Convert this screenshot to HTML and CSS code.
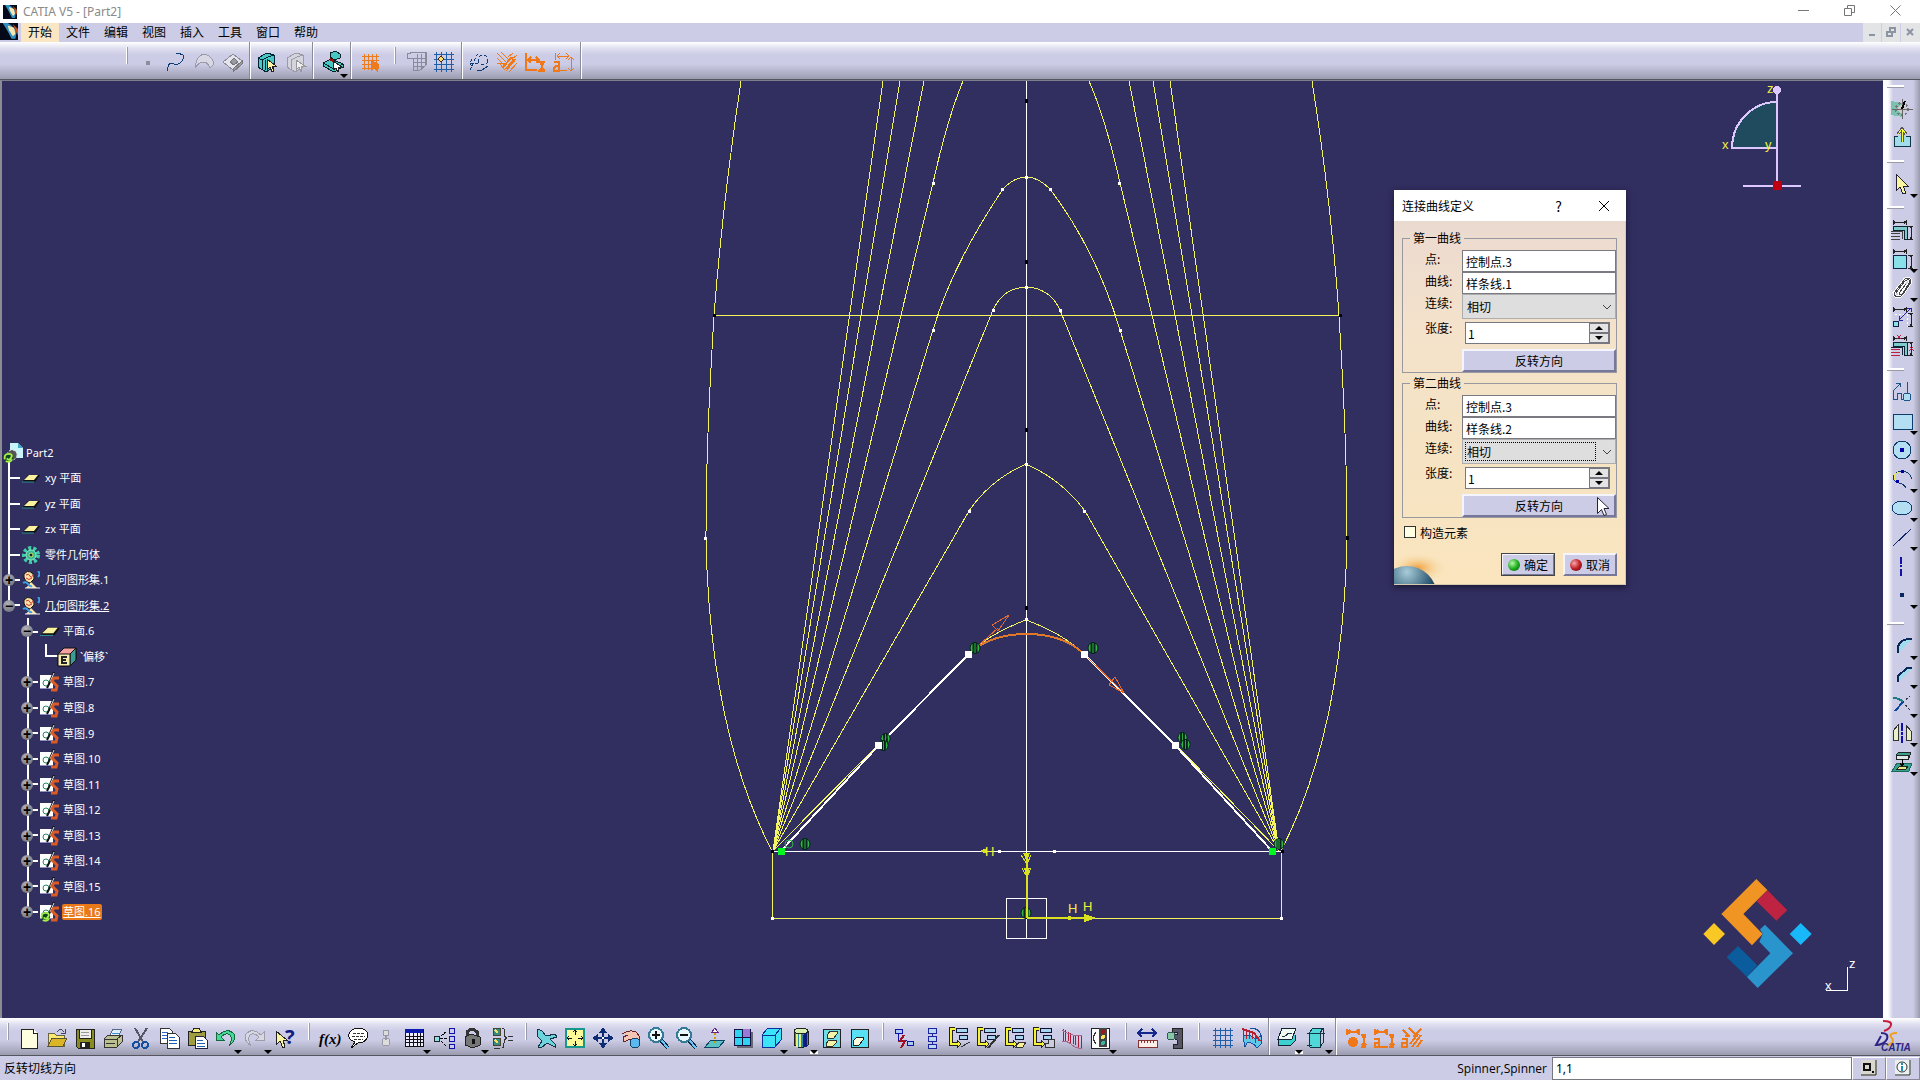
FILE: index.html
```html
<!DOCTYPE html>
<html lang="zh-CN">

<head>
  <meta charset="utf-8" />
  <title>CATIA V5 - [Part2]</title>
  <link rel="stylesheet" href="styles.css">
</head>

<body>
  <!-- shared drawings -->
  <svg class="sprite" aria-hidden="true">
    <symbol id="app" viewBox="0 0 14 14" preserveAspectRatio="none">
      <path d="M0 0h14v14H0z" fill="#050a18" />
      <path d="M2 0l3 5 4 8h3l1-6-4-5-3-2z" fill="#2f8fc0" />
      <path d="M6 2l5 2 1 5-2 2-3-5z" fill="#f6e7b0" />
      <path d="M10 1l4 4v5l-2-4z" fill="#c4501c" />
    </symbol>
    <symbol id="plane" viewBox="0 0 18 14">
      <path d="M1 10L6 4h12l-5 7H1z" fill="#111" />
      <path d="M2 9l5-5h9l-4 5z" fill="#fbf2a0" />
      <path d="M0 11h12" stroke="#2c8a96" />
    </symbol>
    <symbol id="geoset" viewBox="0 0 18 18">
      <path d="M2 3q3-4 7-2 4 3 3 7l-4 4q-7-2-6-9z" fill="#fbe3a8" stroke="#111" />
      <path d="M4 4q3-2 4 1t3-1M4 7q3 3 6 0" fill="none" stroke="#c33" />
      <path d="M4 17l5-6 6 6z" fill="#fbe3a8" />
      <path d="M1 12q3-2 5 1t4 2M16 6q3-3 0-6" fill="none" stroke="#3fa0e8" stroke-width="2" />
      <path d="M3 17h15" stroke="#eee" />
    </symbol>
    <symbol id="sketch" viewBox="0 0 20 20">
      <path d="M0 3h13v14H0z" fill="#fff" />
      <path d="M0 17h15" stroke="#227" />
      <circle cx="6" cy="11" r="3" fill="none" stroke="#2a8a66" />
      <path d="M14 0L9 12l-2 4" fill="none" stroke="#111" stroke-width="2" />
      <path d="M14 1l-4 9" stroke="#d8e8ee" />
      <path d="M19 6h-5l-2 3 5 5-1 4h-5" fill="none" stroke="#dc5a24" stroke-width="3" />
    </symbol>
    <symbol id="update" viewBox="0 0 12 12">
      <circle cx="6" cy="6" r="5" fill="#142" />
      <path d="M2 8q-1-6 4-6 5 0 3 4t-5 1M3 10q5 2 7-2" fill="none" stroke="#a5f04a" stroke-width="2" />
    </symbol>
    <symbol id="hgrid" viewBox="0 0 22 22">
      <path d="M3 1v20M8 1v20M13 1v20M18 1v20M1 3h20M1 8h20M1 13h20M1 18h20" fill="none" stroke="#205ea8" />
    </symbol>
    <symbol id="dims" viewBox="0 0 22 22">
      <path d="M2 1v5M15 1v5M2 3h13M17 7h5M17 20h5M20 8v11M4 2L2 3l2 2M13 2l2 1-2 2M19 9l1-2 1 2M19 18l1 2 1-2" fill="none" stroke="#222" />
    </symbol>
    <symbol id="odims" viewBox="0 0 22 22">
      <path d="M2 2v6M14 2v6M2 5h12M16 8h5M16 20h5M19 9v10M5 3L3 5l2 2M12 3l2 2-2 2M17 11l2-2 2 2M17 17l2 2 2-2" fill="none" stroke="#f07818" stroke-width="2" />
    </symbol>
    <symbol id="steps" viewBox="0 0 22 22">
      <path d="M7 1h11v4H7zM10 8h8v4h-8z" fill="#a8d4f0" stroke="#113" />
      <path d="M6 2H2v15h6" fill="none" stroke="#222" stroke-width="4" />
      <path d="M8 13l4 4-4 4z" fill="#f6f23a" stroke="#222" />
      <path d="M6 2H2v15h7" fill="none" stroke="#f6f23a" stroke-width="2" />
    </symbol>
    <symbol id="constraint" viewBox="0 0 12 12">
      <path d="M4 1q-3 1-3 5t3 5zM8 1q3 1 3 5t-3 5z" fill="#34b44a" stroke="#021" />
      <path d="M6 0v12" stroke="#021" stroke-width="3" />
      <path d="M6 1v10" stroke="#34b44a" />
    </symbol>
    <symbol id="zoomer" viewBox="0 0 22 22">
      <path d="M12 12l8 9" stroke="#124" stroke-width="4" />
      <path d="M13 13l7 8" stroke="#69c8f0" stroke-width="2" />
      <circle cx="8" cy="8" r="7" fill="#e8f8fb" stroke="#357a98" stroke-width="2" />
    </symbol>
  </svg>

  <header class="titlebar">
    <svg class="app-icon"><use href="#app" /></svg>
    <h1>CATIA V5 - [Part2]</h1>
    <div class="window-buttons">
      <button aria-label="最小化"><svg viewBox="0 0 11 11"><path d="M0 5.500h11" /></svg></button>
      <button aria-label="还原"><svg viewBox="0 0 11 11"><path d="M.5 3.500h7v7h-7zM3.500 3V.5h7v7H8" /></svg></button>
      <button aria-label="关闭"><svg viewBox="0 0 11 11"><path d="M.5.5l10 10M10.500.5l-10 10" /></svg></button>
    </div>
  </header>

  <nav class="menubar">
    <svg class="doc-icon"><use href="#app" /></svg>
    <button class="active">开始</button>
    <button>文件</button>
    <button>编辑</button>
    <button>视图</button>
    <button>插入</button>
    <button>工具</button>
    <button>窗口</button>
    <button>帮助</button>
    <div class="mdi-buttons">
      <button aria-label="最小化文档"><svg viewBox="0 0 10 10"><path d="M2 8h6" /></svg></button>
      <button aria-label="还原文档"><svg viewBox="0 0 10 10"><path d="M1 5h5v4H1zM4 4V1h5v4H7" /></svg></button>
      <button aria-label="关闭文档"><svg viewBox="0 0 10 10"><path d="M2 2l6 6M8 2L2 8" /></svg></button>
    </div>
  </nav>

  <div class="toolbar top-toolbar">
    <i class="grip"></i>
    <div class="tools">
      <button aria-label="点"><svg viewBox="0 0 22 22"><path d="M9 10h4v4H9z" fill="#8e8e9a" /></svg></button>
      <button aria-label="样条"><svg viewBox="0 0 22 22"><path d="M3 20q-1-8 4-8 4 3 8 0 5-4 3-8l-5-2-2 1" fill="none" stroke="#0c3c78" /></svg></button>
      <button aria-label="曲面"><svg viewBox="0 0 22 22"><path d="M2 17Q3 6 10 3q9 1 11 10l-4 4q-2-6-7-6-5 1-8 6z" fill="#d8d8e4" stroke="#9a9aa8" /></svg></button>
      <button aria-label="体"><svg viewBox="0 0 22 22"><path d="M2 11l10-8 9 7-9 9z" fill="#e4e4ec" stroke="#8a8a98" /><path d="M12 18l9-8v3l-9 8zM9 11l4-4 4 4-4 3z" fill="#9a9aa6" stroke="#777" /></svg></button>
    </div>
    <div class="tools ruled">
      <button aria-label="选择体"><svg viewBox="0 0 22 22"><path d="M2 7l9-5 7 2v12l-8 5-8-5z" fill="#48c8c4" stroke="#023" /><path d="M6 9l6-3 6-2M6 9v9M9 9v10M2 7l4 2" stroke="#023" fill="none" /><path d="M11 8v11l3-3 2 5 2-1-2-5h4z" fill="#fff4a8" stroke="#222" /></svg></button>
      <button aria-label="选择面"><svg viewBox="0 0 22 22"><path d="M3 7l9-5 7 2v12l-8 5-8-5z" fill="#d4d4de" stroke="#9a9aa8" /><path d="M7 9l6-3 6-2M7 9v9" stroke="#9a9aa8" fill="none" /><path d="M12 9v10l3-3 2 5 1-6h3z" fill="#eee" stroke="#999" /></svg></button>
    </div>
    <div class="tools ruled wide">
      <button class="menu" aria-label="装配"><svg viewBox="0 0 22 22"><path d="M1 12l8-4 12 5v3l-9 5-11-6z" fill="#48c8c4" stroke="#022" /><path d="M1 12l11 6 9-5" fill="none" stroke="#022" /><path d="M8 2l6-2 4 3v4l-6 2-4-3z" fill="#48c8c4" stroke="#022" /><path d="M8 8l6 4" stroke="#911" stroke-width="2" /><path d="M11 10v9l3-2 2 4 1-5h3z" fill="#fff" stroke="#222" /></svg></button>
    </div>
    <div class="tools ruled wide">
      <button aria-label="草图网格"><svg viewBox="0 0 22 22"><path d="M4 3v16M8 3v16M12 3v16M16 3v16M2 5h17M2 9h17M2 13h17M2 17h17" stroke="#ee7a1c" /><path d="M11 9v11l3-2 4 4 1-9z" fill="#ee7a1c" /></svg></button>
    </div>
    <i class="grip"></i>
    <div class="tools">
      <button aria-label="工作支撑面"><svg viewBox="0 0 22 22"><path d="M2 3l7-2h12v13l-6 5H8V7H2zM8 7h12M8 11h12M8 15h11M12 3v16M16 3v16M20 2v12" fill="none" stroke="#8a8a98" /></svg></button>
      <button aria-label="捕捉到点"><svg viewBox="0 0 22 22"><use href="#hgrid" /><path d="M8 5l3 3-3 3-3-3z" fill="#ffe070" stroke="#420" /></svg></button>
    </div>
    <div class="tools ruled">
      <button aria-label="构造元素"><svg viewBox="0 0 22 22"><path d="M2 19L10 2M2 12h8M4 8l-2 4 3 5" stroke="#0c3c78" stroke-dasharray="3 2" fill="none" /><circle cx="15" cy="9" r="5" fill="none" stroke="#0c3c78" stroke-dasharray="4 2" /><path d="M9 19h5l6-4" stroke="#0c3c78" fill="none" /></svg></button>
      <button aria-label="几何约束"><svg viewBox="0 0 22 22"><path d="M1 2l9 9M5 1l8 8M1 7l7 7M1 12h9M10 20L20 8M13 21l8-9M12 6l5-4M16 8l5-4M4 13l5 6" stroke="#f07818" /><path d="M7 16l9-10M10 18l8-10" stroke="#f07818" stroke-width="2" /></svg></button>
      <button aria-label="尺寸约束"><svg viewBox="0 0 22 22"><path d="M2 2v17h11M4 9h10M7 6L4 9l3 3M12 6l3 3-3 3M14 11h7M14 20h7M18 12v8M16 14l2-2 2 2M16 18l2 2 2-2" fill="none" stroke="#f07818" stroke-width="2" /></svg></button>
      <button aria-label="自动约束"><svg viewBox="0 0 22 22"><path d="M5 5h11M8 2L5 5l3 3M14 2l3 3-3 3M3 2v7M19 6v14M16 9l3-3 3 3M16 17l3 3 3-3M8 19h7" fill="none" stroke="#f07818" /><path d="M2 11h5v9M8 15H4l-2 2v3h6" fill="none" stroke="#f07818" stroke-width="2" /></svg></button>
    </div>
    <div class="tools ruled"></div>
  </div>

  <main class="workspace">
    <section class="canvas">
      <svg class="drawing" viewBox="2 81 1881 937" role="img" aria-label="草图">
        <!-- profile curves -->
        <g class="curves">
          <path d="M741 81Q723 200 714 315C709 400 706 460 706 538 708 650 725 760 772 851" />
          <path d="M1312 81Q1331 200 1339 315C1344 400 1347 460 1347 538 1345 650 1328 760 1281 851" />
          <path d="M714 315.500H1339M772.500 851V918.500H1281.500V851" />
          <path d="M883 81L773 851M900 81L861 315 773 851M924 81L878 315 773 851M963 81Q947 120 933 183L901 315 773 851" />
          <path d="M1170 81L1279 851M1153 81L1192 315 1279 851M1129 81L1175 315 1279 851M1089 81Q1106 120 1120 183L1152 315 1279 851" />
          <path d="M773 851L865 550 933 330Q952 265 1003 189 1026 165 1050 189 1096 250 1120 330L1188 550 1279 851" />
          <path d="M773 851L993 310Q1003 288 1026 287 1050 288 1060 310L1279 851" />
          <path d="M773 851L969 511Q990 480 1026 464 1062 480 1085 511L1279 851" />
          <path d="M773 851L879 744 969 654Q990 633 1026 620 1062 633 1084 654L1175 744 1279 851" />
        </g>
        <g class="axes">
          <path d="M1026.500 81V938M772 851.500H1281M1006.500 898.500h40v40h-40z" />
        </g>
        <g class="active-curve">
          <path d="M781 851L879 745 969 654M1084 654L1175 745 1272 851" />
        </g>
        <path class="connect" d="M969 654Q990 634 1027 634 1063 634 1084 654" />
        <path class="tangent" d="M969 654L998 628M1009 615L992 625 998 631zM1084 654L1124 693 1109 685 1115 677 1124 693" />
        <g class="points">
          <path d="M1025 176h3v3h-3zM1001 188h3v3h-3zM1049 188h3v3h-3zM932 182h3v3h-3zM1118 182h3v3h-3zM1025 286h3v3h-3zM992 309h3v3h-3zM1059 309h3v3h-3zM932 329h3v3h-3zM1119 329h3v3h-3zM1025 463h3v3h-3zM968 510h3v3h-3zM1083 510h3v3h-3zM1025 618h3v3h-3zM704 537h3v3h-3zM771 917h3v3h-3zM1280 917h3v3h-3zM998 850h3v3h-3zM1053 850h3v3h-3z" />
          <path fill="#000" d="M1025 99h3v4h-3zM1025 260h3v4h-3zM1025 428h3v4h-3zM1025 606h3v4h-3zM713 314h3v3h-3zM1339 314h3v3h-3zM1346 536h3v4h-3zM771 850h3v3h-3zM1281 850h3v3h-3z" />
        </g>
        <g class="smooth">
          <use href="#constraint" x="969" y="642" width="12" height="12" />
          <use href="#constraint" x="1087" y="642" width="12" height="12" />
          <use href="#constraint" x="880" y="733" width="11" height="11" />
          <use href="#constraint" x="878" y="740" width="11" height="11" />
          <use href="#constraint" x="1177" y="732" width="11" height="11" />
          <use href="#constraint" x="1180" y="739" width="11" height="11" />
          <use href="#constraint" x="799" y="838" width="12" height="12" />
          <use href="#constraint" x="1273" y="838" width="12" height="12" />
          <use href="#constraint" x="1020" y="907" width="12" height="12" />
          <circle cx="789" cy="844" r="4" stroke="#34b44a" />
        </g>
        <path d="M965 651h7v7h-7zM1081 651h7v7h-7zM875 742h7v7h-7zM1172 742h7v7h-7z" fill="#fff" />
        <path d="M778 848h7v7h-7zM1269 848h7v7h-7z" fill="#00f820" />
        <g class="sketch-axes">
          <path class="thick" d="M1027 918V853M1027 918h58" />
          <path d="M1021 855l6 9 4-9M1022 868l5 9 4-9M981 851h10" />
          <path class="solid" d="M1084 914l12 4-12 4zM1023 853h7l-3 9zM1024 868h6l-3 9zM1068 916h3v4h-3zM980 851l7-3v6z" />
          <text x="985" y="856">H</text>
          <text x="1068" y="913">H</text>
          <text x="1083" y="911">H</text>
        </g>
        <!-- compass -->
        <g class="compass">
          <path d="M1777 102A45 46 0 0 0 1732 148H1777z" fill="#204a5e" />
          <path d="M1777 102A45 46 0 0 0 1732 148H1777M1777 90V185M1743 186H1801" />
          <circle cx="1777" cy="90" r="3" />
          <path d="M1773 181h9v9h-9z" class="handle" />
          <text x="1767" y="93">z</text>
          <text x="1722" y="149">x</text>
          <text x="1765" y="149">y</text>
        </g>
        <g class="triad">
          <path d="M1847.500 967V990.500H1826" />
          <text x="1849" y="968">z</text>
          <text x="1825" y="990">x</text>
        </g>
        <svg class="smooth" x="1660" y="840" width="260" height="200" viewBox="0 0 780 600">
          <path d="M290 184l32-34 60 61-33 31z" fill="#be2442" />
          <path d="M289 117l33 33-72 72 58 60-32 34-92-94z" fill="#f09524" />
          <path d="M200 352l34-34 58 58-31 35z" fill="#0a5c9c" />
          <path d="M300 268l15-14 84 86-106 104-32-33 70-71-33-35 10-23z" fill="#2a94cc" />
          <path d="M162 249l33 33-33 33-32-33z" fill="#fac824" />
          <path d="M422 249l33 33-33 33-33-33z" fill="#18b8fa" />
        </svg>
      </svg>

      <div class="tree">
        <svg class="tree-lines" viewBox="0 0 90 485"><path d="M7 20V165M26 178V472M44 204V216H56M8 38H18M8 64H18M8 89H18M8 115H18M8 140H18M8 165H18M26 192H36M26 242H36M26 268H36M26 293H36M26 319H36M26 344H36M26 370H36M26 395H36M26 421H36M26 446H36M26 472H36" /></svg>
        <div class="row root"><svg viewBox="0 0 20 20"><path d="M7 0h8l5 5v10H7z" fill="#c8f4fa" /><path d="M15 0v5h5" fill="#4ac" /><circle cx="9" cy="12" r="5" fill="#555" stroke="#ddd" stroke-dasharray="2 2" /><use href="#update" x="0" y="9" width="11" height="11" /></svg>Part2</div>
        <div class="row"><i></i><svg><use href="#plane" /></svg>xy 平面</div>
        <div class="row"><i></i><svg><use href="#plane" /></svg>yz 平面</div>
        <div class="row"><i></i><svg><use href="#plane" /></svg>zx 平面</div>
        <div class="row"><i></i><svg viewBox="0 0 18 18"><circle cx="9" cy="9" r="7" fill="none" stroke="#3fd0a8" stroke-width="4" stroke-dasharray="3 2" /><circle cx="9" cy="9" r="5" fill="#38b89a" stroke="#8ff0c8" /><circle cx="9" cy="9" r="2" fill="#123" stroke="#cfe95a" /></svg>零件几何体</div>
        <div class="row"><button class="node" aria-label="展开">+</button><svg><use href="#geoset" /></svg>几何图形集.1</div>
        <div class="row"><button class="node minus" aria-label="折叠">−</button><svg><use href="#geoset" /></svg><u>几何图形集.2</u></div>
        <div class="row sub"><button class="node minus" aria-label="折叠">−</button><svg><use href="#plane" /></svg>平面.6</div>
        <div class="row leaf"><i></i><svg viewBox="0 0 20 20"><path d="M1 7l6-6h12v12l-6 6H1z" fill="#f4a0a0" stroke="#111" /><path d="M13 7l6-6v12l-6 6z" fill="#3c9c94" stroke="#111" /><path d="M1 7h12v12H1z" fill="#f4ecb0" stroke="#111" /><path d="M10 10H5v6h5M5 13h4" stroke="#222" stroke-width="2" fill="none" /></svg>`偏移`</div>
        <div class="row sub"><button class="node" aria-label="展开">+</button><svg><use href="#sketch" /></svg>草图.7</div>
        <div class="row sub"><button class="node" aria-label="展开">+</button><svg><use href="#sketch" /></svg>草图.8</div>
        <div class="row sub"><button class="node" aria-label="展开">+</button><svg><use href="#sketch" /></svg>草图.9</div>
        <div class="row sub"><button class="node" aria-label="展开">+</button><svg><use href="#sketch" /></svg>草图.10</div>
        <div class="row sub"><button class="node" aria-label="展开">+</button><svg><use href="#sketch" /></svg>草图.11</div>
        <div class="row sub"><button class="node" aria-label="展开">+</button><svg><use href="#sketch" /></svg>草图.12</div>
        <div class="row sub"><button class="node" aria-label="展开">+</button><svg><use href="#sketch" /></svg>草图.13</div>
        <div class="row sub"><button class="node" aria-label="展开">+</button><svg><use href="#sketch" /></svg>草图.14</div>
        <div class="row sub"><button class="node" aria-label="展开">+</button><svg><use href="#sketch" /></svg>草图.15</div>
        <div class="row sub"><button class="node" aria-label="展开">+</button><svg viewBox="0 0 20 20"><use href="#sketch" /><use href="#update" x="0" y="9" width="11" height="11" /></svg><u class="selected">草图.16</u></div>
      </div>

      <form class="dialog">
        <div class="dialog-title">
          <h2>连接曲线定义</h2>
          <button type="button" aria-label="帮助">?</button>
          <button type="button" aria-label="关闭"><svg viewBox="0 0 12 12"><path d="M1 1l10 10M11 1L1 11" /></svg></button>
        </div>
        <div class="dialog-body">
          <svg class="planet" viewBox="0 0 56 32"><defs><radialGradient id="glow"><stop offset="0" stop-color="#f0a03c" /><stop offset="1" stop-color="#f8dfae" stop-opacity="0" /></radialGradient><radialGradient id="globe" cx=".5" cy=".1"><stop offset="0" stop-color="#a8ccd8" /><stop offset="1" stop-color="#14405e" /></radialGradient></defs><ellipse cx="24" cy="16" rx="28" ry="15" fill="url(#glow)" /><circle cx="13" cy="44" r="30" fill="url(#globe)" /></svg>
          <fieldset>
            <legend>第一曲线</legend>
            <div class="fields">
              <label for="point1">点:</label>
              <input type="text" id="point1" value="控制点.3">
              <label for="curve1">曲线:</label>
              <input type="text" id="curve1" value="样条线.1">
              <label for="cont1">连续:</label>
              <div class="select">
                <select id="cont1"><option>相切</option></select>
                <svg viewBox="0 0 10 6"><path d="M1 1l4 4 4-4" /></svg>
              </div>
              <label for="tension1">张度:</label>
              <div class="spinner">
                <input type="text" id="tension1" value="1">
                <div><button type="button" aria-label="增加"><svg viewBox="0 0 8 4"><path d="M0 4l4-4 4 4z" /></svg></button><button type="button" aria-label="减少"><svg viewBox="0 0 8 4"><path d="M0 0l4 4 4-4z" /></svg></button></div>
              </div>
              <button type="button" class="raised reverse">反转方向</button>
            </div>
          </fieldset>
          <fieldset>
            <legend>第二曲线</legend>
            <div class="fields">
              <label for="point2">点:</label>
              <input type="text" id="point2" value="控制点.3">
              <label for="curve2">曲线:</label>
              <input type="text" id="curve2" value="样条线.2">
              <label for="cont2">连续:</label>
              <div class="select current">
                <select id="cont2"><option>相切</option></select>
                <svg viewBox="0 0 10 6"><path d="M1 1l4 4 4-4" /></svg>
              </div>
              <label for="tension2">张度:</label>
              <div class="spinner">
                <input type="text" id="tension2" value="1">
                <div><button type="button" aria-label="增加"><svg viewBox="0 0 8 4"><path d="M0 4l4-4 4 4z" /></svg></button><button type="button" aria-label="减少"><svg viewBox="0 0 8 4"><path d="M0 0l4 4 4-4z" /></svg></button></div>
              </div>
              <button type="button" class="raised reverse">反转方向</button>
            </div>
          </fieldset>
          <label class="check"><input type="checkbox"> 构造元素</label>
          <div class="actions">
            <button type="button" class="raised default"><i class="ball green"></i>确定</button>
            <button type="button" class="raised"><i class="ball red"></i>取消</button>
          </div>
        </div>
        <svg class="cursor" viewBox="0 0 12 19"><path d="M.5.5v16l4-4 2.500 6 2.500-1-2.500-6h5z" fill="#fff" stroke="#223" /></svg>
      </form>
    </section>

    <aside class="sidebar">
      <i class="grip"></i>
      <button aria-label="草图编辑器"><svg viewBox="0 0 22 22"><path d="M0 3l12 2v14L0 17z" fill="#7cc0b0" /><circle cx="11" cy="11" r="6" fill="none" stroke="#777" stroke-width="2" stroke-dasharray="2 2" /><circle cx="11" cy="11" r="4" fill="#ccc" /><path d="M1 11h21M11 1v20" stroke="#666" /><path d="M14 3l-3 8" stroke="#000" stroke-width="2" /></svg></button>
      <button aria-label="退出工作台"><svg viewBox="0 0 22 22"><path d="M7 9H3v10h16V9h-4" fill="#a0dcec" stroke="#134" /><path d="M11 15V3M7 7l4-5 4 5" fill="none" stroke="#555" stroke-width="3" /><path d="M11 15V3M7 7l4-5 4 5" fill="none" stroke="#f6f63a" /></svg></button>
      <i class="grip"></i>
      <button class="menu" aria-label="选择"><svg viewBox="0 0 22 22"><path d="M5 1v17l4-4 3 7 3-1-3-7h5z" fill="#fbf4a0" stroke="#223" /></svg></button>
      <i class="grip"></i>
      <button aria-label="对话框约束"><svg viewBox="0 0 22 22"><use href="#dims" /><path d="M2 7h14v13h-3V11H2z" fill="#7ccccc" stroke="#123" /><path d="M0 12h11v8M0 14h9M0 17h9M0 20h9" fill="none" stroke="#444" /></svg></button>
      <button class="menu" aria-label="约束"><svg viewBox="0 0 22 22"><use href="#dims" /><path d="M2 7h13v13H2z" fill="#8ae0e8" stroke="#124" /></svg></button>
      <button class="menu" aria-label="固联"><svg viewBox="0 0 22 22"><path d="M5 16l9-12q4-3 5 1L10 19q-6 3-7-3L14 2q6-2 6 3L12 17q-3 2-4-1l7-9" fill="none" stroke="#fff" stroke-width="3" /><path d="M5 16l9-12q4-3 5 1L10 19q-6 3-7-3L14 2q6-2 6 3L12 17q-3 2-4-1l7-9" fill="none" stroke="#444" /></svg></button>
      <button aria-label="动画约束"><svg viewBox="0 0 22 22"><use href="#dims" /><path d="M4 8h12v13" stroke="#fff" stroke-dasharray="2" fill="none" /><path d="M2 15h5v5H2z" fill="#8ae0e8" stroke="#124" /><path d="M8 14L20 2M16 2h4v4M8 10v4h4" fill="none" stroke="#22a" /></svg></button>
      <button aria-label="编辑多重约束"><svg viewBox="0 0 22 22"><use href="#dims" /><path d="M2 7h14v13h-3V11H2z" fill="#7ccccc" stroke="#123" /><path d="M0 12h11v8" fill="none" stroke="#123" /><path d="M0 14h9M0 17h9M0 20h9" stroke="#c02040" /><path d="M6 0l4 4M10 0L6 4M19 12l4 4M22 12l-4 4" stroke="#c02040" /></svg></button>
      <i class="grip"></i>
      <div class="shapes">
        <button aria-label="轮廓"><svg viewBox="0 0 22 22"><path d="M9 3L2 10v8h4v-6h4v6h3M5 2h4v4M16 1v11" fill="none" stroke="#1a5488" /><circle cx="16" cy="16" r="4" fill="#b0dcf0" stroke="#1a5488" /></svg></button>
        <button class="menu" aria-label="矩形"><svg viewBox="0 0 22 22"><path d="M2 4h19v15H2z" fill="#b4def2" stroke="#0c3c6c" /></svg></button>
        <button class="menu" aria-label="圆"><svg viewBox="0 0 22 22"><circle cx="11" cy="11" r="9" fill="#b4def2" stroke="#0c3c6c" /><path d="M9 9h4v4H9z" fill="#00a" /></svg></button>
        <button class="menu" aria-label="样条线"><svg viewBox="0 0 22 22"><path d="M21 11Q18 3 11 3 3 4 2 10q1 4 6 5 5 1 7 5" fill="none" stroke="#0c3c6c" /><path d="M9 4Q3 5 3 9q0 3 3 4" fill="none" stroke="#e8e850" /><path d="M10 2h3v3h-3zM5 12h3v3H5z" fill="#00a" /></svg></button>
        <button class="menu" aria-label="椭圆"><svg viewBox="0 0 22 22"><ellipse cx="11" cy="11" rx="10" ry="7" fill="#b4def2" stroke="#0c3c6c" /></svg></button>
        <button class="menu" aria-label="直线"><svg viewBox="0 0 22 22"><path d="M2 20L20 3" stroke="#0c2868" /></svg></button>
        <button aria-label="轴"><svg viewBox="0 0 22 22"><path d="M10 2v7M10 10v2M10 14v7" stroke="#11a" stroke-width="2" /></svg></button>
        <button class="menu" aria-label="点"><svg viewBox="0 0 22 22"><path d="M9 9h4v4H9z" fill="#0c2464" /></svg></button>
      </div>
      <i class="grip"></i>
      <button class="menu" aria-label="圆角"><svg viewBox="0 0 22 22"><path d="M7 18V12Q8 4 21 4" fill="#a0dcec" stroke="#0c2858" stroke-width="2" /></svg></button>
      <button class="menu" aria-label="倒角"><svg viewBox="0 0 22 22"><path d="M7 18V12l9-8h5" fill="#a0dcec" stroke="#0c2858" stroke-width="2" /></svg></button>
      <button class="menu" aria-label="修剪"><svg viewBox="0 0 22 22"><path d="M2 5q6 0 10 4" fill="none" stroke="#1a7c80" stroke-width="2" /><path d="M4 18l8-9" stroke="#11489c" stroke-width="2" /><path d="M12 9l7-6M12 9l7 8" stroke="#333" stroke-dasharray="2" /></svg></button>
      <button class="menu" aria-label="镜像"><svg viewBox="0 0 22 22"><path d="M2 18V9l5-6v15zM20 18V9l-5-6v15z" fill="#e8f0c8" stroke="#333" /><path d="M11 1v8M11 10v3M11 14v7" stroke="#11a" stroke-width="2" /></svg></button>
      <button class="menu" aria-label="投影三维元素"><svg viewBox="0 0 22 22"><path d="M5 4l3-3h12l-2 6H6z" fill="#38a08c" stroke="#222" /><path d="M5 4h12v4H5z" fill="#dfe8e8" stroke="#222" /><path d="M1 20l5-8h15l-3 8z" fill="#38a08c" stroke="#1a6a60" /><path d="M6 18l3-3h8l-2 3z" fill="#f0e880" stroke="#222" /><path d="M11 8v6M9 12l2 3 2-3" stroke="#000" fill="none" /></svg></button>
    </aside>
  </main>

  <div class="toolbar bottom-toolbar">
    <i class="grip"></i>
    <div class="tools">
      <button aria-label="新建"><svg viewBox="0 0 22 22"><path d="M3 2h12l4 4v15H3z" fill="#fffde0" stroke="#222" /><path d="M15 2v4h4" fill="#fff" stroke="#222" /></svg></button>
      <button aria-label="打开"><svg viewBox="0 0 22 22"><path d="M2 6h6l2 2h8v11H2z" fill="#fbe870" stroke="#664" /><path d="M2 19l4-8h15l-4 8z" fill="#dcb428" stroke="#553" /><path d="M11 5q4-5 7 0M19 2v4h-4" fill="none" stroke="#446" /></svg></button>
      <button aria-label="保存"><svg viewBox="0 0 22 22"><path d="M2 2h18v19H4l-2-2z" fill="#8a8c20" stroke="#222" /><path d="M5 2h12v9H5z" fill="#eee" stroke="#222" /><path d="M7 5h8M7 8h8" stroke="#999" /><path d="M6 15h10v6H6z" fill="#222" /><path d="M8 16h3v4H8z" fill="#fff" /></svg></button>
      <button aria-label="打印"><svg viewBox="0 0 22 22"><path d="M7 10l4-8h9l-4 8z" fill="#e0f0fa" stroke="#568" /><path d="M10 6h7M9 8h7" stroke="#468cd0" /><path d="M2 12l4-4h14v7l-5 5H2z" fill="#bcc090" stroke="#333" /><path d="M2 12h13v8M15 12l5-4M4 16h9" fill="none" stroke="#333" /></svg></button>
      <button aria-label="剪切"><svg viewBox="0 0 22 22"><path d="M5 1l8 14M17 1L8 15" stroke="#556" stroke-width="2" /><circle cx="6" cy="18" r="3" fill="none" stroke="#1450a0" stroke-width="2" /><circle cx="15" cy="18" r="3" fill="none" stroke="#1450a0" stroke-width="2" /></svg></button>
      <button aria-label="复制"><svg viewBox="0 0 22 22"><path d="M2 1h9l3 3v12H2z" fill="#fff" stroke="#333" /><path d="M4 5h6M4 8h6M4 11h6" stroke="#36c" /><path d="M9 6h8l4 4v11H9z" fill="#fff" stroke="#333" /><path d="M11 10h6M11 13h8M11 16h8" stroke="#1460b8" /></svg></button>
      <button aria-label="粘贴"><svg viewBox="0 0 22 22"><path d="M2 4h17v14H2z" fill="#a09c40" stroke="#222" /><path d="M6 5l2-4h5l2 4z" fill="#f4ec80" stroke="#222" /><path d="M9 9h8l4 4v8H9z" fill="#fff" stroke="#224" /><path d="M11 13h6M11 16h8M11 19h8" stroke="#2460b0" /></svg></button>
      <button class="menu" aria-label="撤销"><svg viewBox="0 0 22 22"><path d="M2 5v8h8l-3-3q5-5 9-2 3 4-1 11 8-6 5-12Q14 0 5 8z" fill="#48d898" stroke="#146840" /></svg></button>
      <button class="menu" aria-label="重做"><svg viewBox="0 0 22 22"><path d="M20 5v8h-8l3-3q-5-5-9-2-3 4 1 11-8-6-5-12Q8 0 17 8z" fill="#d8d8e2" stroke="#9c9caa" /></svg></button>
      <button aria-label="这是什么"><svg viewBox="0 0 22 22"><path d="M2 4v14l4-4 3 7 2-1-2-7h4z" fill="#fbf4a0" stroke="#222" /><text x="11" y="17" font-size="20" font-weight="bold" fill="#101c80">?</text></svg></button>
    </div>
    <i class="grip"></i>
    <div class="tools">
      <button aria-label="公式"><svg viewBox="0 0 22 22"><text class="formula" x="0" y="17">f(x)</text></svg></button>
      <button aria-label="注释"><svg viewBox="0 0 22 22"><path d="M4 21l4-6q-7-2-6-8 2-6 10-6 9 1 9 8-2 7-10 7z" fill="#fff" stroke="#111" /><path d="M6 6h11M5 9h13M7 12h9" stroke="#333" stroke-dasharray="3 1" /></svg></button>
      <button aria-label="锁定"><svg viewBox="0 0 22 22"><circle cx="11" cy="6" r="3" fill="#ddd" stroke="#9999a6" /><circle cx="11" cy="15" r="4" fill="#ddd" stroke="#9999a6" /><path d="M11 9v4" stroke="#9999a6" stroke-width="2" /></svg></button>
      <button class="menu" aria-label="设计表"><svg viewBox="0 0 22 22"><path d="M2 2h18v17H2z" fill="#eef" stroke="#111" /><path d="M2 2h18v4H2z" fill="#0c1cac" /><path d="M2 9h18M2 12h18M2 15h18M6 6v13M10 6v13M14 6v13M17 6v13" stroke="#111" /></svg></button>
      <button aria-label="父级子级"><svg viewBox="0 0 22 22"><path d="M1 9h5v5H1z" fill="#8ae0e8" stroke="#222" /><path d="M16 1h5v5h-5zM16 9h5v5h-5zM16 17h5v4h-5z" fill="#cce" stroke="#11a" /><path d="M7 11h8M8 9l6-5M8 14l5 5" stroke="#000" stroke-dasharray="3 1" /></svg></button>
      <button class="menu" aria-label="锁"><svg viewBox="0 0 22 22"><path d="M6 9V5q5-6 10 0v5" fill="none" stroke="#333" stroke-width="3" /><path d="M4 10l6-3 9 3v8l-7 3-8-3z" fill="#777" stroke="#222" /><path d="M12 12v5" stroke="#111" stroke-width="3" /></svg></button>
      <button aria-label="等效尺寸"><svg viewBox="0 0 22 22"><path d="M2 1h7v7H2zM2 11h7v7H2z" fill="#3a8c80" stroke="#443" /><path d="M4 3l3 3M4 13l3 3" stroke="#f8e060" stroke-width="2" /><path d="M11 1q3 0 2 5 0 4 3 5-3 1-3 5 0 5-2 5M17 9h5M17 13h5M3 21h6" fill="none" stroke="#333" /></svg></button>
    </div>
    <i class="grip"></i>
    <div class="tools">
      <button aria-label="飞行"><svg viewBox="0 0 22 22"><path d="M2 2l4 2 4 5 9-2 2 3-7 2 5 5v3l-8-4-6 5-3-1 4-6-5-5z" fill="#6cd4dc" stroke="#134" /></svg></button>
      <button aria-label="适应全部"><svg viewBox="0 0 22 22"><path d="M2 2h18v18H2z" fill="#fbf898" stroke="#18988c" stroke-width="2" /><path d="M11 3v5M11 14v5M3 11h5M14 11h5M9 5l2-2 2 2M9 17l2 2 2-2M5 9l-2 2 2 2M17 9l2 2-2 2" stroke="#111" fill="none" /></svg></button>
      <button aria-label="平移"><svg viewBox="0 0 22 22"><path d="M11 2v18M2 11h18M9 5l2-3 2 3zM9 17l2 3 2-3zM5 9l-3 2 3 2zM17 9l3 2-3 2z" fill="#0c2c74" stroke="#0c2c74" stroke-width="2" /><path d="M10 10h2v2h-2z" fill="#fff" /></svg></button>
      <button aria-label="旋转"><svg viewBox="0 0 22 22"><path d="M2 7q7-5 14-2l4 5-1 4-8-2-8 3v-5l5-2" fill="#f4c4b4" stroke="#622" /><circle cx="15" cy="16" r="5" fill="#5cb8f0" stroke="#146" /></svg></button>
      <button aria-label="放大"><svg viewBox="0 0 22 22"><use href="#zoomer" /><path d="M4 8h8M8 4v8" stroke="#111" stroke-width="2" /></svg></button>
      <button aria-label="缩小"><svg viewBox="0 0 22 22"><use href="#zoomer" /><path d="M4 8h8" stroke="#111" stroke-width="2" /></svg></button>
      <button aria-label="法线视图"><svg viewBox="0 0 22 22"><path d="M1 20l6-7h14l-6 7z" fill="#5cc4c4" stroke="#146" /><path d="M11 16V5" stroke="#c8a000" stroke-width="2" stroke-dasharray="2" /><path d="M8 5l3-4 3 4z" fill="#fff" stroke="#628" /></svg></button>
      <button aria-label="多视图"><svg viewBox="0 0 22 22"><path d="M5 5h16v16H5z" fill="#667" /><path d="M2 2h16v16H2z" fill="#30d4f0" stroke="#114" /><path d="M10 2h8v8h-8z" fill="#9c78d8" /><path d="M10 2v16M2 10h16" stroke="#114" /></svg></button>
      <button class="menu" aria-label="等轴测"><svg viewBox="0 0 22 22"><path d="M2 8l6-7h13v12l-6 7H2z" fill="#3ce4f8" stroke="#0c30a0" /><path d="M2 8h13v12M15 8l6-7" fill="none" stroke="#0c30a0" /></svg></button>
      <button class="menu light" aria-label="着色"><svg viewBox="0 0 22 22"><path d="M4 4v14q7 5 14 0V4z" fill="#2a8ca0" stroke="#222" /><path d="M7 7v13M10 7v13" stroke="#e8f080" stroke-width="2" /><path d="M13 8v12h4V6z" fill="#0c1c80" /><ellipse cx="11" cy="4" rx="7" ry="3" fill="#d8f0b0" stroke="#222" /></svg></button>
      <button aria-label="隐藏显示"><svg viewBox="0 0 22 22"><path d="M3 2h17v18H3z" fill="#70dce8" stroke="#222" /><path d="M7 9l3-5h7v3l-3 4H7zM6 17l3-4h7v3l-3 3H6z" fill="#f4f4a8" stroke="#333" /></svg></button>
      <button aria-label="交换可视空间"><svg viewBox="0 0 22 22"><path d="M3 2h17v18H3z" fill="#58e0f4" stroke="#222" /><path d="M5 14l4-4h6v3l-4 5H5z" fill="#fffce0" stroke="#222" /></svg></button>
    </div>
    <i class="grip"></i>
    <div class="tools">
      <button aria-label="更新"><svg viewBox="0 0 22 22"><path d="M2 2h7v4H2zM14 14h6v4h-6z" fill="#ace" stroke="#11a" /><path d="M5 7v6h9" fill="none" stroke="#11a" /><path d="M11 8l-4 6h5l-4 7" fill="none" stroke="#a01020" stroke-width="2" /></svg></button>
      <button aria-label="列表"><svg viewBox="0 0 22 22"><path d="M7 1h8v5H7zM7 9h8v5H7zM7 17h8v4H7z" fill="#bcd8f0" stroke="#1824a0" /><path d="M11 6v3M11 14v3" stroke="#1824a0" /></svg></button>
      <button aria-label="工作台一"><svg viewBox="0 0 22 22"><use href="#steps" /><path d="M12 20l9-5" stroke="#333" /></svg></button>
      <button aria-label="工作台二"><svg viewBox="0 0 22 22"><use href="#steps" /><path d="M11 21L22 8" stroke="#333" stroke-width="2" /></svg></button>
      <button aria-label="工作台三"><svg viewBox="0 0 22 22"><use href="#steps" /><path d="M11 20l3-5h7l-3 5z" fill="#fbf098" stroke="#333" /></svg></button>
      <button aria-label="工作台四"><svg viewBox="0 0 22 22"><use href="#steps" /><path d="M12 20v-4h3v-4h6v8z" fill="#ccd" stroke="#333" /></svg></button>
      <button aria-label="曲率"><svg viewBox="0 0 22 22"><path d="M2 2v12M4 3v11M7 5v9M9 6v10M12 8v9M14 8v10M17 9v12M20 8v13" stroke="#b01838" /><path d="M1 14q6 0 10 4t10 3M1 3q8 6 20 6" fill="none" stroke="#a68" /></svg></button>
      <button class="menu" aria-label="求解诊断"><svg viewBox="0 0 22 22"><path d="M2 1h18v20H2z" fill="#fff" stroke="#222" /><path d="M7 5q-5 6 0 12" fill="none" stroke="#333" /><path d="M10 1h8v19h-8z" fill="#444" /><circle cx="14" cy="5" r="2" fill="#a01818" /><circle cx="14" cy="10" r="2" fill="#f8e060" /><circle cx="14" cy="16" r="2" fill="#3cb4a0" /></svg></button>
    </div>
    <i class="grip"></i>
    <div class="tools">
      <button aria-label="测量间距"><svg viewBox="0 0 22 22"><path d="M3 6h16M6 2L2 6l4 4M16 2l4 4-4 4" fill="none" stroke="#14288c" stroke-width="2" /><path d="M2 13h19v7H2z" fill="#fbeee8" stroke="#833" /><path d="M5 13v3M8 13v3M11 13v3M14 13v3M17 13v3" stroke="#833" /></svg></button>
      <button aria-label="测量项"><svg viewBox="0 0 22 22"><path d="M8 1h10v20H9v-4h4v-4l-4-2V7h4V5H8z" fill="#556" stroke="#222" /><circle cx="7" cy="9" r="4" fill="#88c8a8" stroke="#355" /></svg></button>
    </div>
    <i class="grip"></i>
    <div class="tools spaced">
      <button aria-label="网格"><svg viewBox="0 0 22 22"><use href="#hgrid" /></svg></button>
      <button aria-label="曲率分析"><svg viewBox="0 0 22 22"><path d="M3 9q8-2 12 3l6-3v8l-4 4q-5-7-10-5l-2 4z" fill="#60c8e8" stroke="#1450a0" /><path d="M2 2l12 4 6 8" fill="none" stroke="#b82030" stroke-width="2" /><path d="M3 2v12M6 3v9M9 4v8M12 5v7M15 8v8" stroke="#b82030" /><path d="M10 2q9-2 11 7" fill="none" stroke="#1450a0" /></svg></button>
    </div>
    <div class="tools ruled">
      <button class="menu light" aria-label="剖切"><svg viewBox="0 0 22 22"><path d="M3 12v6h13l4-4V8" fill="#3cd0d0" stroke="#123" /><path d="M3 12L7 1h14l-4 11z" fill="#f0f8f4" stroke="#123" /><path d="M7 10q5-1 6-4h4" fill="none" stroke="#234" /></svg></button>
      <button class="menu" aria-label="显示约束"><svg viewBox="0 0 22 22"><path d="M4 6l4-5h10l-3 5v14H5z" fill="#50d8d8" stroke="#134" /><path d="M2 6h18M15 6l3-4v14l-3 4M2 18h5" stroke="#134" fill="none" /></svg></button>
    </div>
    <div class="tools ruled wide">
      <button aria-label="诊断"><svg viewBox="0 0 22 22"><use href="#odims" /><circle cx="8" cy="15" r="5" fill="#f07818" /></svg></button>
      <button aria-label="尺寸"><svg viewBox="0 0 22 22"><use href="#odims" /><path d="M1 12h5v8H2v-4h5M7 20h8" fill="none" stroke="#f07818" stroke-width="2" /></svg></button>
      <button aria-label="几何"><svg viewBox="0 0 22 22"><path d="M2 3l7 7M8 1l9 9M4 9h5M12 10l8-8M11 20l9-12M16 20l5-7" stroke="#f07818" stroke-width="2" /><path d="M1 12h5v8H1v-4h6M9 17l8-10" fill="none" stroke="#f07818" stroke-width="2" /></svg></button>
    </div>
    <svg class="brand" viewBox="0 0 40 32">
      <path d="M9 1q9 0 8 4t-7 6" fill="none" stroke="#c8203c" stroke-width="2" />
      <path d="M7 13q8 0 6 6-3 6-11 6l5-9" fill="none" stroke="#2c2484" stroke-width="2" />
      <path d="M23 13q-8 0-6 4 5 5-3 8" fill="none" stroke="#f0a020" stroke-width="2" />
      <text x="7" y="31">CATIA</text>
    </svg>
  </div>

  <footer class="statusbar">
    <span class="hint">反转切线方向</span>
    <label for="power">Spinner,Spinner</label>
    <input type="text" id="power" value="1,1">
    <button aria-label="命令"><svg viewBox="0 0 16 16"><path d="M0 0h16v16H0z" fill="#d8d8ce" /><path d="M15 0v15H0" fill="none" stroke="#222" /><path d="M3 4h6v6H3z" fill="none" stroke="#111" stroke-width="2" /><path d="M11 11h2v2h-2z" /></svg></button>
    <button aria-label="信息"><svg viewBox="0 0 16 16"><path d="M0 0h16v16H0z" fill="#e8f0f0" /><path d="M15 0v15H0" fill="none" stroke="#222" /><circle cx="7" cy="7" r="5" fill="#fff" stroke="#333" /><path d="M7 6v5M7 3v2" stroke="#1890b8" stroke-width="2" /></svg></button>
  </footer>
</body>

</html>
```
FILE: styles.css
```css
* {
  box-sizing: border-box;
}

body {
  display: flex;
  flex-direction: column;
  height: 100vh;
  margin: 0;
  overflow: hidden;
  background: #cccce6;
  color: #000;
  font: 12px "Noto Sans", "Noto Sans CJK SC", sans-serif;
}

button,
input,
select {
  margin: 0;
  padding: 0;
  border: 0;
  border-radius: 0;
  background: none;
  color: inherit;
  font: inherit;
}

.sprite {
  position: absolute;
  width: 0;
  height: 0;
}

/* title and menu */
.titlebar {
  display: flex;
  align-items: center;
  flex: none;
  height: 23px;
  padding: 0 2px 0 3px;
  background: #fff;
  color: #8a8a8a;
}

.titlebar h1 {
  flex: 1;
  margin: 0 0 0 6px;
  font: 12px "Noto Sans", sans-serif;
}

.app-icon {
  width: 14px;
  height: 14px;
}

.window-buttons,
.mdi-buttons {
  display: flex;
}

.window-buttons button {
  width: 46px;
  height: 20px;
}

.window-buttons svg {
  width: 11px;
  height: 11px;
  fill: none;
  stroke: #777;
}

.menubar {
  display: flex;
  flex: none;
  height: 19px;
}

.doc-icon {
  width: 18px;
  height: 17px;
  margin-right: 3px;
}

.menubar button {
  width: 38px;
  line-height: 19px;
}

.menubar .active {
  background: #fae6c3;
}

.mdi-buttons {
  gap: 1px;
  margin-left: auto;
  border-right: 1px solid #e4e4e8;
}

.mdi-buttons button {
  width: 18px;
  background: #e3e4e6;
}

.mdi-buttons svg {
  width: 10px;
  height: 10px;
  fill: none;
  stroke: #8c93a2;
  stroke-width: 2;
}

/* toolbars */
.toolbar {
  display: flex;
  flex: none;
  height: 38px;
  border-bottom: 1px solid #55555f;
  background: linear-gradient(#fff, #dedeef 18%, #cccce6 35%, #cccce6 60%, #9c9cb0);
}

.top-toolbar {
  padding-left: 117px;
}

.grip {
  flex: none;
  width: 2px;
  height: 17px;
  margin: 5px 6px 0 9px;
  border-left: 1px solid #fff;
  border-right: 1px solid #9a9aa8;
}

.bottom-toolbar .grip:first-child {
  margin-left: 7px;
}

.tools {
  display: flex;
  align-items: center;
  padding-top: 3px;
}

.tools.ruled {
  padding-left: 3px;
  border-left: 1px solid #8a8a98;
  box-shadow: inset 1px 0 #fff;
  margin-left: 3px;
}

.tools.wide {
  padding-left: 6px;
}

.tools.spaced {
  padding-left: 3px;
}

.tools button {
  position: relative;
  width: 28px;
  height: 28px;
}

.tools svg {
  display: block;
  width: 22px;
  height: 22px;
  margin: 0 auto;
  overflow: visible;
  shape-rendering: crispEdges;
}

.formula {
  font: italic bold 15px "Liberation Serif", serif;
}

.bottom-toolbar .menu {
  width: 30px;
  padding-right: 2px;
}

.menu::after {
  content: "";
  position: absolute;
  right: -1px;
  bottom: -2px;
  border: 4px solid transparent;
  border-top-color: #000;
  border-bottom: 0;
}

.menu.light::after {
  background: #fff;
}

.brand {
  width: 40px;
  height: 32px;
  margin: 2px 6px 0 auto;
}

.brand text {
  fill: #2c2484;
  font: italic bold 10px "Liberation Sans", sans-serif;
}

/* 3D view */
.workspace {
  display: flex;
  flex: 1;
  min-height: 0;
}

.canvas {
  position: relative;
  flex: 1;
  border-top: 1px solid #7d7d8c;
  border-left: 2px solid #8c8c94;
  background: #312e60;
}

.drawing {
  position: absolute;
  width: 100%;
  height: 100%;
  fill: none;
  shape-rendering: crispEdges;
}

.drawing text {
  fill: #f2f23c;
  stroke: none;
  font: 13px "Liberation Sans", sans-serif;
}

.smooth {
  shape-rendering: auto;
}

.curves {
  stroke: #f4f45c;
}

.axes {
  stroke: #fff;
}

.active-curve {
  stroke: #fff;
  stroke-width: 2;
}

.connect {
  stroke: #e07828;
  stroke-width: 2;
}

.tangent {
  stroke: #e06a30;
}

.points {
  fill: #fff;
}

.sketch-axes {
  stroke: #d8e020;
}

.sketch-axes .thick {
  stroke-width: 2;
}

.sketch-axes .solid {
  fill: #d8e020;
  stroke: none;
}

.compass {
  stroke: #dcc8fc;
  stroke-width: 2;
}

.compass circle {
  fill: #dcc8fc;
}

.compass .handle {
  fill: #c00010;
  stroke: none;
}

.triad {
  stroke: #fff;
}

.drawing .triad text {
  fill: #fff;
}

/* specification tree */
.tree {
  position: absolute;
  top: 359px;
  left: 0;
  display: grid;
  grid-auto-rows: 1fr;
  height: 485px;
  color: #fff;
  font-size: 11px;
}

.tree-lines {
  position: absolute;
  width: 90px;
  height: 485px;
  fill: none;
  stroke: #fff;
  stroke-width: 2;
  shape-rendering: crispEdges;
}

.row {
  position: relative;
  display: flex;
  align-items: center;
  padding-left: 1px;
  line-height: 16px;
  white-space: pre;
}

.row i,
.node {
  width: 12px;
  height: 12px;
  margin-right: 7px;
}

.node {
  border-radius: 50%;
  background: radial-gradient(circle at 40% 30%, #b0b0b8, #66666e);
  color: #000;
  font: bold 14px/10px "Liberation Sans", sans-serif;
}

.row svg {
  width: 18px;
  height: 18px;
  margin-right: 5px;
}

.row.sub {
  padding-left: 19px;
}

.row.leaf {
  padding-left: 36px;
}

.row.root svg,
.row.leaf svg,
.row.sub svg {
  width: 20px;
  height: 20px;
  margin-right: 3px;
}

.selected {
  padding: 0 1px;
  margin-left: -1px;
  border-radius: 2px;
  background: #e87818;
}

/* dialog */
.dialog {
  position: absolute;
  top: 109px;
  right: 257px;
  width: 232px;
  box-shadow: 0 2px 6px rgba(0, 0, 0, .5);
  font-family: "Noto Sans CJK SC", sans-serif;
}

.dialog-title {
  display: flex;
  align-items: center;
  height: 31px;
  padding-left: 8px;
  background: #fff;
}

.dialog-title h2 {
  flex: 1;
  margin: 0;
  font-size: 12px;
  font-weight: normal;
}

.dialog-title button {
  width: 45px;
  height: 30px;
  font-size: 14px;
}

.dialog-title svg {
  width: 12px;
  height: 12px;
  stroke: #000;
}

.dialog-body {
  position: relative;
  padding: 11px 8px 8px;
  border: solid #d8c8b0;
  border-width: 0 1px 1px 0;
  background: linear-gradient(#ebdad0, #f4e2cb 30%, #f5e3c4 60%, #fae5be);
}

.planet {
  position: absolute;
  left: 0;
  bottom: 0;
  width: 56px;
  height: 32px;
}

fieldset {
  min-width: 0;
  margin: 0 0 4px;
  padding: 0;
  border: 1px solid #9898a0;
}

legend {
  margin-left: 7px;
  padding: 0 3px;
  line-height: 12px;
}

.fields {
  display: grid;
  grid-template-columns: 37px minmax(0, 1fr);
  padding: 6px 0 0 22px;
}

.fields label {
  line-height: 18px;
}

.fields > input {
  width: 100%;
  height: 22px;
  padding-left: 3px;
  border: 1px solid #7a7a80;
  background: #fff;
}

.select {
  position: relative;
}

.select select {
  appearance: none;
  width: 100%;
  height: 25px;
  padding-left: 4px;
  border: 1px solid #adadad;
  background: #dedede;
}

.select svg {
  position: absolute;
  top: 10px;
  right: 4px;
  width: 10px;
  height: 6px;
  fill: none;
  stroke: #444;
}

.current::after {
  content: "";
  position: absolute;
  inset: 3px 20px 3px 3px;
  border: 1px dotted #000;
}

.spinner {
  display: flex;
  height: 22px;
  margin: 3px 6px 0 3px;
  border: 1px solid #77777f;
  background: #fff;
}

.spinner input {
  flex: 1;
  min-width: 0;
  padding-left: 2px;
}

.spinner div {
  display: flex;
  flex-direction: column;
  width: 20px;
}

.spinner button {
  display: flex;
  flex: 1;
  align-items: center;
  justify-content: center;
  border: 1px solid #77777f;
  background: #e4e4e4;
}

.spinner svg {
  width: 8px;
  height: 4px;
}

.raised {
  height: 23px;
  border: 2px solid;
  border-color: #f4f4fc #77779a #77779a #f4f4fc;
  background: #cccce6;
}

.reverse {
  grid-column: 2;
  margin-top: 5px;
}

.check {
  display: flex;
  align-items: center;
  gap: 4px;
  height: 14px;
  margin: 7px 0 0 2px;
}

.check input {
  appearance: none;
  width: 12px;
  height: 12px;
  border: 1px solid #333;
  background: #ffffe4;
}

.actions {
  display: flex;
  justify-content: flex-end;
  gap: 8px;
  margin-top: 14px;
}

.actions button {
  display: flex;
  align-items: center;
  justify-content: center;
  gap: 4px;
  width: 54px;
}

.actions .default {
  outline: 1px solid #444;
  outline-offset: -1px;
}

.ball {
  width: 12px;
  height: 12px;
  border-radius: 50%;
}

.green {
  background: radial-gradient(circle at 35% 35%, #b8f8a8, #20b020 50%, #0a500a);
}

.red {
  background: radial-gradient(circle at 35% 35%, #f8a8a8, #c02028 50%, #500a0a);
}

.cursor {
  position: absolute;
  right: 17px;
  bottom: 69px;
  width: 12px;
  height: 19px;
}

/* sketch tools at the right */
.sidebar {
  display: flex;
  flex-direction: column;
  flex: none;
  width: 37px;
  background: linear-gradient(90deg, #fff, #fff 5px, #cccce6 10px, #cccce6 30px, #9a9aae);
}

.sidebar .grip {
  width: 17px;
  height: 3px;
  margin: 8px 0 6px 4px;
  border: 0;
  border-top: 2px solid #fff;
  border-bottom: 1px solid #9a9aa8;
}

.sidebar .grip:first-child {
  margin-top: 5px;
}

.sidebar button {
  position: relative;
  flex: none;
  width: 100%;
  height: 29px;
}

.shapes {
  display: flex;
  flex-direction: column;
  padding-bottom: 5px;
}

.sidebar svg {
  display: block;
  width: 22px;
  height: 22px;
  margin-left: 8px;
  overflow: visible;
  shape-rendering: crispEdges;
}

.sidebar .menu::after {
  right: 2px;
  bottom: 0;
}

/* status bar */
.statusbar {
  display: flex;
  align-items: center;
  flex: none;
  height: 24px;
  padding-left: 4px;
}

.hint {
  flex: 1;
}

.statusbar label {
  font-family: "Open Sans", sans-serif;
}

.statusbar input {
  width: 300px;
  height: 23px;
  margin-left: 5px;
  padding-left: 3px;
  border: 1px solid #77777f;
  background: #fff;
}

.statusbar button {
  width: 34px;
  height: 23px;
  border: 1px solid;
  border-color: #fff #88889a #88889a #fff;
}

.statusbar svg {
  display: block;
  width: 16px;
  height: 16px;
  margin: 0 auto;
}
```
